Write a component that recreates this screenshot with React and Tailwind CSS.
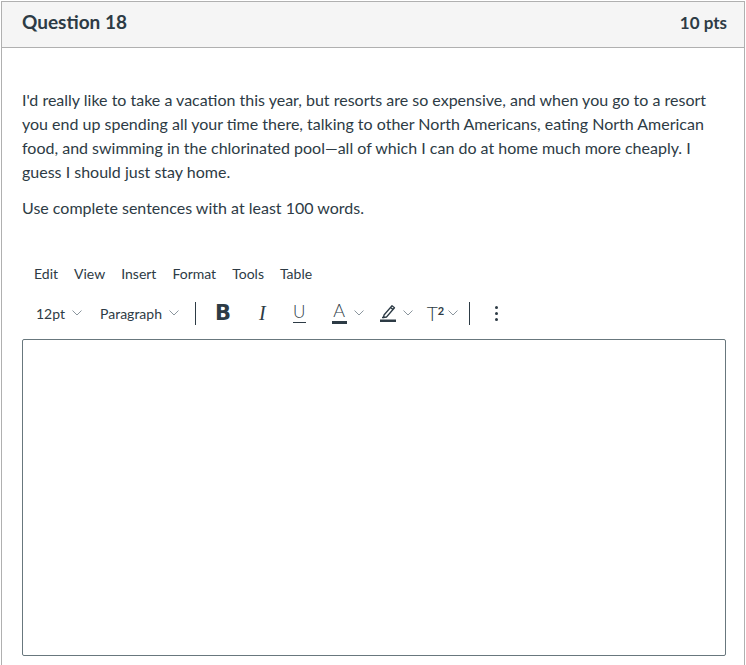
import React from "react";

function Chevron() {
  return (
    <svg width="10" height="6" viewBox="0 0 10 6" className="text-[#8b969e]">
      <path d="M0.5 0.5 L5 5 L9.5 0.5" fill="none" stroke="currentColor" strokeWidth="1" />
    </svg>
  );
}

function Highlighter() {
  return (
    <svg width="16" height="18" viewBox="0 0 16 18">
      <path
        d="M4 11 L10.5 3.5 L13 5.5 L6.5 13 L3.5 13.5 Z M10.5 3.5 L12 1.8 L14.5 3.8 L13 5.5"
        fill="none"
        stroke="#2d3b45"
        strokeWidth="1.3"
        strokeLinejoin="round"
      />
      <path d="M3.5 13.5 L2 13.5" stroke="#2d3b45" strokeWidth="1.3" />
      <rect x="0" y="15.5" width="16" height="2.5" fill="#2d3b45" />
    </svg>
  );
}

function Divider() {
  return <div className="w-px h-[23px] bg-[#2d3b45]" />;
}

export default function App() {
  const menus = ["Edit", "View", "Insert", "Format", "Tools", "Table"];

  return (
    <div
      className="w-[746px] h-[665px] bg-white overflow-hidden pl-px pt-px text-[#2d3b45]"
      style={{ fontFamily: "Lato, 'Open Sans', sans-serif" }}
    >
      <div className="w-[744px] h-[700px] border border-[#b0b0b0]">
        <div className="h-[46px] bg-[#f5f5f5] border-b border-[#b0b0b0] flex items-center justify-between pl-5 pr-[17px] pb-[4px]">
          <h2 className="text-[19px] font-bold">Question 18</h2>
          <span className="text-[17px] font-bold">10 pts</span>
        </div>

        <div className="pt-[40px] pl-5 pr-[18px]">
          <p className="text-[16px] leading-[24px]">
            I'd really like to take a vacation this year, but resorts are so expensive, and when you go to a resort
            you end up spending all your time there, talking to other North Americans, eating North American food,
            and swimming in the chlorinated pool—all of which I can do at home much more cheaply. I guess I should
            just stay home.
          </p>
          <p className="text-[16px] leading-[24px] mt-3">Use complete sentences with at least 100 words.</p>

          <div className="mt-[43px] h-[20px] flex items-center gap-4 pl-3 text-[14px]">
            {menus.map((m) => (
              <span key={m}>{m}</span>
            ))}
          </div>

          <div className="mt-[15px] h-[30px] flex items-center text-[14px]">
            <div className="flex items-center gap-[7px] pl-[14px]">
              <span>12pt</span>
              <Chevron />
            </div>
            <div className="flex items-center gap-[7px] ml-[18px]">
              <span>Paragraph</span>
              <Chevron />
            </div>
            <div className="ml-[16px]">
              <Divider />
            </div>
            <span
              className="ml-[19px] text-[21px] font-bold leading-none"
              style={{ fontFamily: "'DejaVu Sans', sans-serif" }}
            >
              B
            </span>
            <span
              className="ml-[28px] text-[20px] italic leading-none"
              style={{ fontFamily: "'Liberation Serif', serif" }}
            >
              I
            </span>
            <span className="ml-[27px] flex flex-col items-center leading-none">
              <span className="text-[17px] leading-[15px] font-light">U</span>
              <span className="w-[13px] h-px bg-[#2d3b45] mt-[3px]" />
            </span>
            <div className="ml-[26px] flex items-center gap-[7px]">
              <span className="flex flex-col items-center leading-none">
                <span className="text-[18px] leading-[15px] font-light">A</span>
                <span className="w-[15px] h-[3px] bg-[#2d3b45] mt-[3px]" />
              </span>
              <Chevron />
            </div>
            <div className="ml-[16px] flex items-center gap-[7px]">
              <Highlighter />
              <Chevron />
            </div>
            <div className="ml-[14px] flex items-center gap-[4px]">
              <span className="text-[19px] leading-none font-light">
                T<sup className="text-[11px] font-bold">2</sup>
              </span>
              <Chevron />
            </div>
            <div className="ml-[11px]">
              <Divider />
            </div>
            <div className="ml-[25px] flex flex-col gap-[3px]">
              <span className="w-[3px] h-[3px] rounded-full bg-[#2d3b45]" />
              <span className="w-[3px] h-[3px] rounded-full bg-[#2d3b45]" />
              <span className="w-[3px] h-[3px] rounded-full bg-[#2d3b45]" />
            </div>
          </div>

          <div className="mt-[11px] w-[704px] h-[317px] border border-[#68777d] rounded-[2px] bg-white" />
        </div>
      </div>
    </div>
  );
}
